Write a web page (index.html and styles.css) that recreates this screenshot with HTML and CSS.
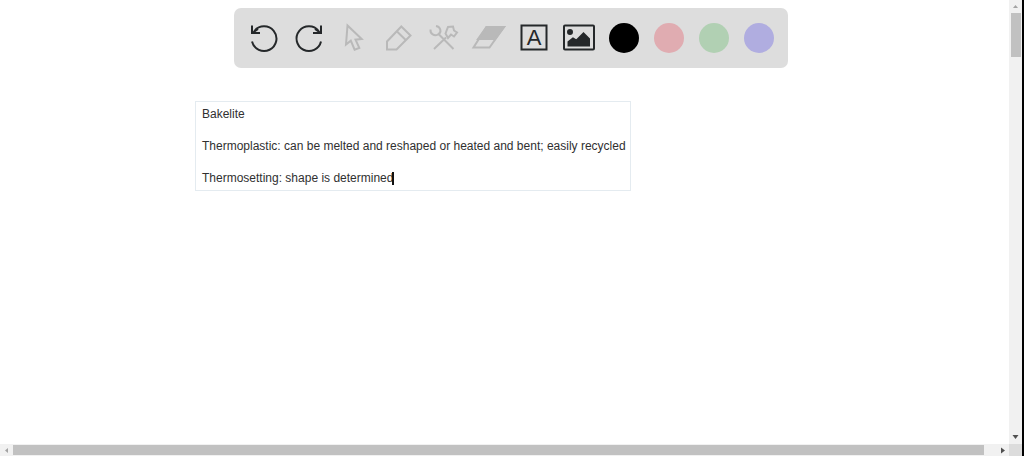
FILE: index.html
```html
<!DOCTYPE html>
<html lang="en">
<head>
<meta charset="utf-8">
<title>Whiteboard</title>
<link rel="stylesheet" href="styles.css">
</head>
<body>
<div class="app">
  <header class="toolbar" role="toolbar" aria-label="Drawing tools">
    <button class="tool" type="button" aria-label="Undo"><svg width="32" height="32" viewBox="0 0 32 32"><path d="M4 19.500A12.400 12.400 0 1 0 6.300 9M4 3.500v7.500h8M5 10.500l5-3.500"/></svg></button>
    <button class="tool" type="button" aria-label="Redo"><svg width="32" height="32" viewBox="0 0 32 32"><path d="M28 19.500A12.400 12.400 0 1 1 25.700 9M28 3.500v7.500h-8M27 10.500l-5-3.500"/></svg></button>
    <button class="tool faded" type="button" aria-label="Select"><svg width="32" height="32" viewBox="0 0 32 32"><path d="M9.500 3.500 8 22.500l4.800-3.800 3.800 9 4.700-1.800-3.800-8.200 6.200-.7z"/></svg></button>
    <button class="tool faded" type="button" aria-label="Pen"><svg width="32" height="32" viewBox="0 0 32 32"><path d="M4 27.500V19.500L18.300 4.500l9.200 9L13.500 27.500zM14 9.500l9 8.800"/></svg></button>
    <button class="tool faded" type="button" aria-label="Tools"><svg width="32" height="32" viewBox="0 0 32 32"><path d="M6 27 18 15.500M25.500 27 11 12.500M2.500 7.500c-.5 4.500 4 7 7.500 5 4-2 3-7.500-2-8.500M17.500 11.500l2.500-6.500 5-.5 1 4 3 2-3 4-3-2-3 3.500z"/></svg></button>
    <button class="tool faded" type="button" aria-label="Eraser"><svg width="36" height="32" viewBox="0 0 36 32"><path class="solid" d="M15.500 5H33L24 17H7z"/><path d="M15.500 5H33L18.500 25.500H2.500z"/></svg></button>
    <button class="tool" type="button" aria-label="Text"><svg width="32" height="32" viewBox="0 0 32 32"><rect x="3.500" y="3.500" width="25" height="24"/><text class="letter" x="16" y="23" text-anchor="middle">A</text></svg></button>
    <button class="tool" type="button" aria-label="Image"><svg width="36" height="32" viewBox="0 0 36 32"><rect x="3" y="3.500" width="30" height="24" rx="1"/><circle class="solid" cx="9" cy="10" r="2"/><path class="solid" d="M7.500 23.500V20l4.500-3.500 3.500 2 7-7 5.500 5.500v6.500z"/></svg></button>
    <button class="tool" type="button" aria-label="Black"><span class="swatch black"></span></button>
    <button class="tool" type="button" aria-label="Red"><span class="swatch red"></span></button>
    <button class="tool" type="button" aria-label="Green"><span class="swatch green"></span></button>
    <button class="tool" type="button" aria-label="Purple"><span class="swatch purple"></span></button>
  </header>
  <main class="canvas">
    <div class="note">
      <textarea class="note-text" aria-label="Text note" rows="5" spellcheck="false" wrap="off">Bakelite

Thermoplastic: can be melted and reshaped or heated and bent; easily recycled

Thermosetting: shape is determined</textarea>
      <span class="caret"></span>
    </div>
  </main>
  <div class="scroll vertical">
    <svg class="arrow light" viewBox="0 0 13 13"><path d="M4 8h5L6.500 5z"/></svg>
    <div class="track"><div class="thumb"></div></div>
    <svg class="arrow" viewBox="0 0 13 13"><path d="M3.500 4h6l-3 4z"/></svg>
  </div>
  <div class="scroll horizontal">
    <svg class="arrow light" viewBox="0 0 13 13"><path d="M8 4v5L5 6.500z"/></svg>
    <div class="track"><div class="thumb"></div></div>
    <svg class="arrow" viewBox="0 0 13 13"><path d="M5 3.500v6l4-3z"/></svg>
  </div>
  <div class="corner"></div>
</div>
</body>
</html>
```
FILE: styles.css
```css
* {
  box-sizing: border-box;
}

body {
  margin: 0;
  background: #fff;
  font-family: "Liberation Sans", Arial, sans-serif;
}

.app {
  display: grid;
  grid-template-columns: 1fr 13px;
  grid-template-rows: 1fr 12px;
  height: 100vh;
  border-right: 2px solid #000;
  overflow: hidden;
  position: relative;
}

/* The toolbar floats over the drawing surface. */
.toolbar {
  position: absolute;
  z-index: 1;
  top: 8px;
  left: 50%;
  transform: translateX(-50%);
  display: grid;
  grid-template-columns: repeat(12, 45px);
  padding: 0 7px;
  border-radius: 7px;
  background: #ddd;
}

.tool {
  display: grid;
  place-items: center;
  height: 60px;
  padding: 0;
  border: 0;
  background: none;
  color: #25282a;
}

.tool svg {
  fill: none;
  stroke: currentColor;
  stroke-width: 2;
}

.tool .solid {
  fill: currentColor;
}

.tool .letter {
  fill: currentColor;
  stroke: none;
  font: 22px "Liberation Sans", Arial, sans-serif;
}

.faded {
  color: #b9b9b9;
}

.swatch {
  width: 30px;
  height: 30px;
  border-radius: 50%;
}

.black { background: #000; }
.red { background: #e0acb1; }
.green { background: #b1d0b3; }
.purple { background: #b0ade0; }

.canvas {
  position: relative;
  overflow: hidden;
}

.note {
  position: absolute;
  left: 195px;
  top: 101px;
  width: 436px;
}

.note-text {
  display: block;
  width: 100%;
  height: 90px;
  padding: 4px 6px;
  border: 1px solid #e4ebf0;
  outline: 0;
  resize: none;
  overflow: hidden;
  background: none;
  color: #303030;
  font: 12px/16px "Liberation Sans", Arial, sans-serif;
}

.caret {
  position: absolute;
  right: 237px;
  bottom: 6px;
  width: 2px;
  height: 13px;
  background: #111;
}

.scroll {
  display: flex;
  background: #f1f1f1;
}

.vertical {
  flex-direction: column;
}

.horizontal {
  grid-row: 2;
  grid-column: 1;
}

.track {
  flex: 1;
}

.vertical .thumb {
  width: 10px;
  height: 44px;
  margin: 0 auto;
  background: #c1c1c1;
}

.horizontal .track {
  padding: 1px 12px 1px 0;
}

.horizontal .thumb {
  height: 10px;
  background: #c1c1c1;
}

.arrow {
  flex: none;
  width: 13px;
  height: 13px;
  fill: #505050;
}

.light {
  fill: #a3a3a3;
}

.corner {
  background: #dcdcdc;
}
```
